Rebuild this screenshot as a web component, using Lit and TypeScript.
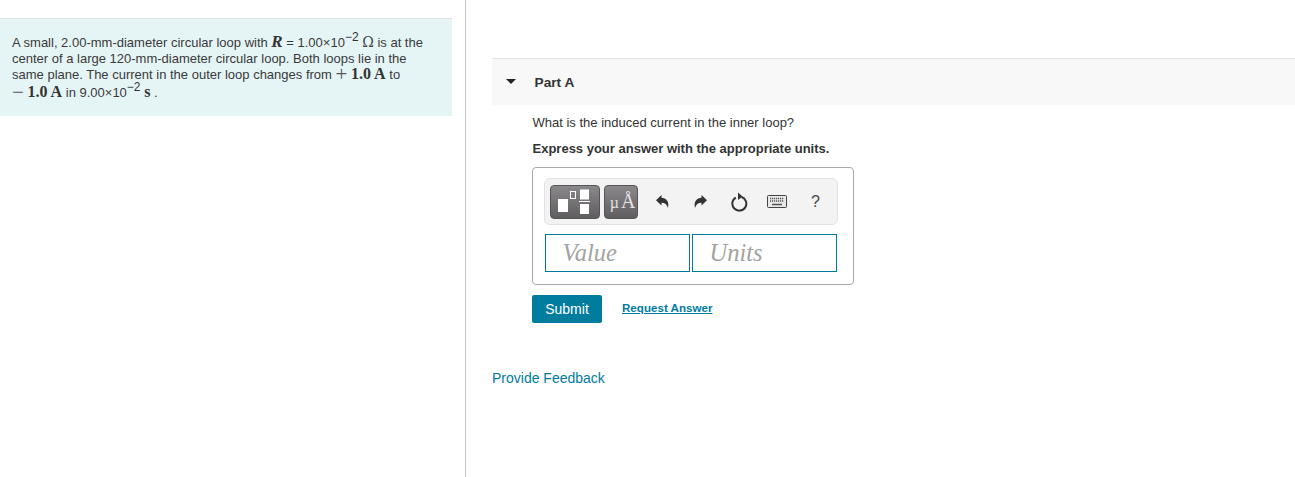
import { LitElement, html, css } from "lit";
import { customElement } from "lit/decorators.js";

@customElement("app-root")
export class AppRoot extends LitElement {
  static styles = css`
    :host { display: block; width: 1295px; height: 477px; overflow: hidden; font-family: "Liberation Sans", Arial, sans-serif; color: #333; font-size: 13px; background: #fff; }
    .page { display: flex; height: 477px; }
    .left { width: 465px; height: 477px; border-right: 1px solid #c8c8c8; padding-top: 18px; box-sizing: content-box; flex: none; }
    .intro { width: 452px; height: 97px; box-sizing: content-box; background: #e5f5f6; border-top: 1px solid #e2e2e2; }
    .intro-text { padding: 14px 20px 0 12px; line-height: 16px; font-size: 13px; color: #3a3a3a; }
    .nw { white-space: nowrap; }
    .m { font-family: "Liberation Serif", serif; font-weight: bold; font-size: 16px; line-height: 10px; color: #333; }
    .mi { font-family: "Liberation Serif", serif; font-style: italic; font-weight: bold; font-size: 17px; line-height: 10px; color: #333; }
    .mo { font-family: "Liberation Serif", serif; font-size: 21px; line-height: 10px; color: #555; vertical-align: -2px; }
    .om { font-family: "DejaVu Serif", serif; font-size: 14px; line-height: 10px; color: #444; }
    sup { font-family: "Liberation Sans", sans-serif; font-size: 12px; line-height: 8px; vertical-align: 6px; color: #333; }
    .right { flex: 1; padding: 58px 0 0 26px; min-width: 0; }
    .header { height: 46px; background: #f8f8f8; border-top: 1px solid #e2e2e2; display: flex; align-items: center; }
    .tri { width: 0; height: 0; border-left: 5.5px solid transparent; border-right: 5.5px solid transparent; border-top: 5.5px solid #222; margin-left: 14px; margin-top: -1px; }
    .title { margin-left: 18.5px; font-weight: bold; font-size: 13.7px; color: #333; }
    .body { padding-left: 40px; }
    .q { margin-top: 10px; line-height: 16px; font-size: 13px; padding-left: .5px; }
    .ins { margin-top: 10px; line-height: 16px; font-size: 13px; font-weight: bold; padding-left: .5px; }
    .box { margin-top: 10px; width: 322px; height: 118px; box-sizing: border-box; border: 1px solid #aaa; border-radius: 4px; padding: 10px 15px 0 11px; }
    .toolbar { height: 47px; box-sizing: border-box; background: #f3f3f3; border: 1px solid #e2e2e2; border-radius: 6px; display: flex; align-items: center; padding: 0 5px; }
    .tbtn { flex: none; height: 34px; box-sizing: border-box; border-radius: 4px; border: 1px solid #555; background: linear-gradient(#8a888b, #5f5d60); display: flex; align-items: center; justify-content: center; margin-right: 4px; }
    .t1 { width: 50px; }
    .t2 { width: 34px; color: #e4e4e4; font-family: "Liberation Serif", serif; font-size: 20px; line-height: 1; align-items: baseline; gap: 2px; padding-top: 5px; padding-left: 3px; margin-right: 5px; }
    .mu { font-size: 16px; }
    .icons { display: flex; align-items: center; flex: none; }
    .ic { flex: none; width: 38.3px; display: flex; justify-content: center; align-items: center; }
    .help { font-size: 16px; color: #444; }
    .inputs { display: flex; gap: 2px; margin-top: 9px; padding-left: 1px; }
    .field { width: 145px; height: 38px; box-sizing: border-box; border: 1px solid #007c9e; padding-left: 16.5px; display: flex; align-items: center; font-family: "Liberation Serif", serif; font-style: italic; font-size: 24.5px; color: #a3a3a3; }
    .actions { display: flex; align-items: flex-start; margin-top: 10px; }
    .submit { width: 70px; height: 28px; border-radius: 2px; background: #007c9e; color: #fff; font-size: 14px; display: flex; align-items: center; justify-content: center; }
    .req { margin-left: 20px; margin-top: 5px; line-height: 15px; color: #007c9e; font-weight: bold; font-size: 11.6px; text-decoration: underline; }
    .fb { margin-top: 47px; line-height: 16px; font-size: 14px; color: #007c9e; }
  `;

  render() {
    return html`
      <div class="page">
        <div class="left">
          <div class="intro">
            <div class="intro-text">A small, 2.00-mm-diameter circular loop with <span class="mi">R</span> = 1.00×10<sup>−2</sup> <span class="om">Ω</span> is at the center of a large 120-mm-diameter circular loop. Both loops lie in the same plane. The current in the outer loop changes from <span class="nw"><span class="mo">+</span> <span class="m">1.0 A</span></span> to <span class="nw"><span class="mo">−</span> <span class="m">1.0 A</span></span> in 9.00×10<sup>−2</sup> <span class="m">s</span> .</div>
          </div>
        </div>
        <div class="right">
          <div class="header"><div class="tri"></div><div class="title">Part A</div></div>
          <div class="body">
            <div class="q">What is the induced current in the inner loop?</div>
            <div class="ins">Express your answer with the appropriate units.</div>
            <div class="box">
              <div class="toolbar">
                <div class="tbtn t1">
                  <svg width="48" height="32" viewBox="0 0 48 32">
                    <rect x="7" y="13" width="10" height="13" fill="#fff"/>
                    <rect x="19.5" y="5.5" width="5" height="7" fill="none" stroke="#fff"/>
                    <rect x="29" y="3.5" width="9" height="10" fill="#fff"/>
                    <rect x="28" y="15" width="11" height="1" fill="#fff"/>
                    <rect x="29" y="18" width="9" height="10" fill="#fff"/>
                  </svg>
                </div>
                <div class="tbtn t2"><span class="mu">µ</span><span>Å</span></div>
                <div class="icons">
                  <div class="ic"><svg width="15" height="15" viewBox="0 0 15 15"><path d="M1 6.3 L6.5 1 V3.8 C11 3.8 14.5 7.5 13 14 C12 10.5 10 8.8 6.5 8.8 V11.5 Z" fill="#333"/></svg></div>
                  <div class="ic"><svg width="15" height="15" viewBox="0 0 15 15"><path d="M14 6.3 L8.5 1 V3.8 C4 3.8 .5 7.5 2 14 C3 10.5 5 8.8 8.5 8.8 V11.5 Z" fill="#333"/></svg></div>
                  <div class="ic"><svg width="18" height="20" viewBox="0 0 18 20"><path d="M5.8 5.6 A7 7 0 1 0 11.5 5" fill="none" stroke="#333" stroke-width="2"/><path d="M8 0.5 L12.5 4.5 L8 8 Z" fill="#333"/></svg></div>
                  <div class="ic"><svg width="20" height="13" viewBox="0 0 20 13"><rect x="0.5" y="0.5" width="19" height="12" rx="1" fill="#e8e8e8" stroke="#444"/><path d="M3 3.5h14M3 6h14" stroke="#555" stroke-width="1.3" stroke-dasharray="1.2 .8"/><path d="M5 9.5h10" stroke="#555" stroke-width="1.5"/></svg></div>
                  <div class="ic help">?</div>
                </div>
              </div>
              <div class="inputs"><div class="field">Value</div><div class="field">Units</div></div>
            </div>
            <div class="actions"><div class="submit">Submit</div><div class="req">Request Answer</div></div>
          </div>
          <div class="fb">Provide Feedback</div>
        </div>
      </div>
    `;
  }
}
